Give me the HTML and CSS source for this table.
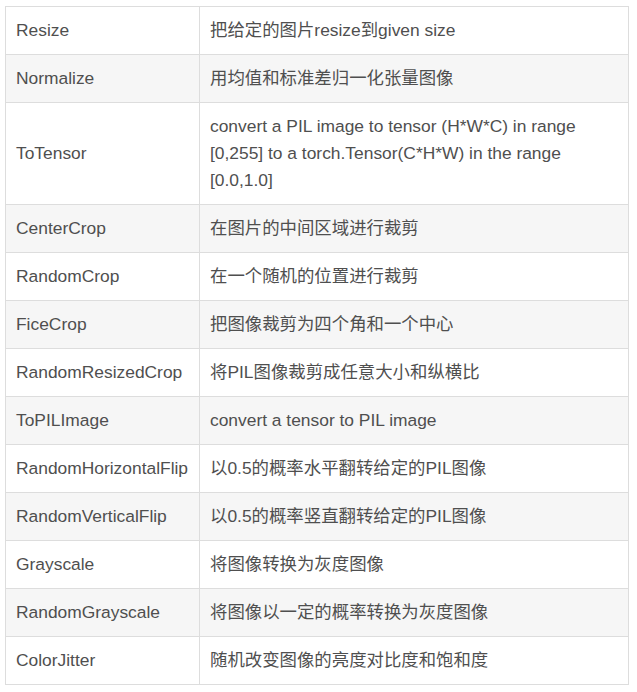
FILE: index.html
```html
<!DOCTYPE html>
<html>
<head>
<meta charset="utf-8">
<link rel="stylesheet" href="styles.css">
</head>
<body>
<div class="page">
<table class="tbl">
<colgroup><col class="c1"><col class="c2"></colgroup>
<tbody>
<tr><td>Resize</td><td>把给定的图片resize到given size</td></tr>
<tr><td>Normalize</td><td>用均值和标准差归一化张量图像</td></tr>
<tr><td>ToTensor</td><td>convert a PIL image to tensor (H*W*C) in range [0,255] to a torch.Tensor(C*H*W) in the range [0.0,1.0]</td></tr>
<tr><td>CenterCrop</td><td>在图片的中间区域进行裁剪</td></tr>
<tr><td>RandomCrop</td><td>在一个随机的位置进行裁剪</td></tr>
<tr><td>FiceCrop</td><td>把图像裁剪为四个角和一个中心</td></tr>
<tr><td>RandomResizedCrop</td><td>将PIL图像裁剪成任意大小和纵横比</td></tr>
<tr><td>ToPILImage</td><td>convert a tensor to PIL image</td></tr>
<tr><td>RandomHorizontalFlip</td><td>以0.5的概率水平翻转给定的PIL图像</td></tr>
<tr><td>RandomVerticalFlip</td><td>以0.5的概率竖直翻转给定的PIL图像</td></tr>
<tr><td>Grayscale</td><td>将图像转换为灰度图像</td></tr>
<tr><td>RandomGrayscale</td><td>将图像以一定的概率转换为灰度图像</td></tr>
<tr><td>ColorJitter</td><td>随机改变图像的亮度对比度和饱和度</td></tr>
</tbody>
</table>
</div>
</body>
</html>
```
FILE: styles.css
```css
html, body {
  margin: 0;
  padding: 0;
  background: #fff;
}
.page {
  padding: 6px 0 0 5px;
}
.tbl {
  border-collapse: collapse;
  width: 624px;
  table-layout: fixed;
  font-family: "Liberation Sans", Arial, "Noto Sans CJK SC", sans-serif;
  font-size: 17.4px;
  line-height: 27px;
  color: #4f4f4f;
}
.c1 { width: 194px; }
.tbl td {
  border: 1px solid #ddd;
  padding: 10px 10px 10px 10px;
  vertical-align: middle;
  text-align: left;
}
.tbl tr:nth-child(even) td {
  background: #f6f6f6;
}
```
